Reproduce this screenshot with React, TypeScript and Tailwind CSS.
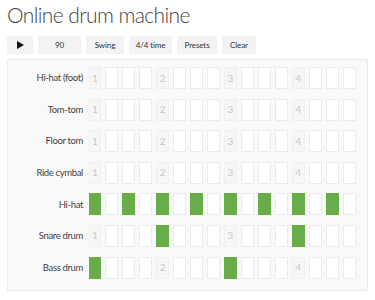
const ROWS: { name: string; hits: number[] }[] = [
  { name: "Hi-hat (foot)", hits: [] },
  { name: "Tom-tom", hits: [] },
  { name: "Floor tom", hits: [] },
  { name: "Ride cymbal", hits: [] },
  { name: "Hi-hat", hits: [0, 2, 4, 6, 8, 10, 12, 14] },
  { name: "Snare drum", hits: [4, 12] },
  { name: "Bass drum", hits: [0, 8] },
];

const BUTTONS = [
  { label: "90", w: "w-[43px]" },
  { label: "Swing", w: "w-[38px]" },
  { label: "4/4 time", w: "w-[43px]" },
  { label: "Presets", w: "w-[40px]" },
  { label: "Clear", w: "w-[34px]" },
];

function Cell({ index, on }: { index: number; on: boolean }) {
  const beat = index % 4 === 0;
  if (on) return <div className="h-[22px] bg-[#69ad4b]" />;
  if (beat)
    return (
      <div className="flex h-[22px] items-center justify-center border border-[#f0f0f0] bg-[#f6f6f6] text-[10px] text-[#c8c8c8]">
        {index / 4 + 1}
      </div>
    );
  return <div className="h-[22px] border border-[#ececec] bg-white" />;
}

export default function App() {
  return (
    <div className="h-[300px] w-[375px] overflow-hidden bg-white px-[7px] font-['Lato',sans-serif] text-[#444]">
      <h1 className="h-[34px] pt-[1px] text-[21px] font-light leading-[28px] tracking-[-0.6px]">
        Online drum machine
      </h1>

      <div className="mt-[2px] flex gap-[5px]">
        <button className="flex h-[18px] w-[26px] items-center justify-center bg-[#f3f3f3]">
          <svg width="7" height="8" viewBox="0 0 7 8">
            <path d="M0 0 L7 4 L0 8 Z" fill="#111" />
          </svg>
        </button>
        {BUTTONS.map((b) => (
          <button
            key={b.label}
            className={`h-[18px] ${b.w} bg-[#f3f3f3] text-[8px] tracking-[-0.1px] text-[#333]`}
          >
            {b.label}
          </button>
        ))}
      </div>

      <div className="mt-[5px] h-[232px] border border-[#ececec] bg-[#f9f9f9] pt-[7px]">
        {ROWS.map((row) => (
          <div key={row.name} className="mb-[9.6px] flex h-[22px] items-center">
            <div className="w-[75px] text-right text-[9.5px] leading-none tracking-[-0.35px] text-[#444]">
              {row.name}
            </div>
            <div className="ml-[5.5px] grid w-[267px] grid-cols-16 gap-x-[4px]">
              {Array.from({ length: 16 }, (_, i) => (
                <Cell key={i} index={i} on={row.hits.includes(i)} />
              ))}
            </div>
          </div>
        ))}
      </div>
    </div>
  );
}
